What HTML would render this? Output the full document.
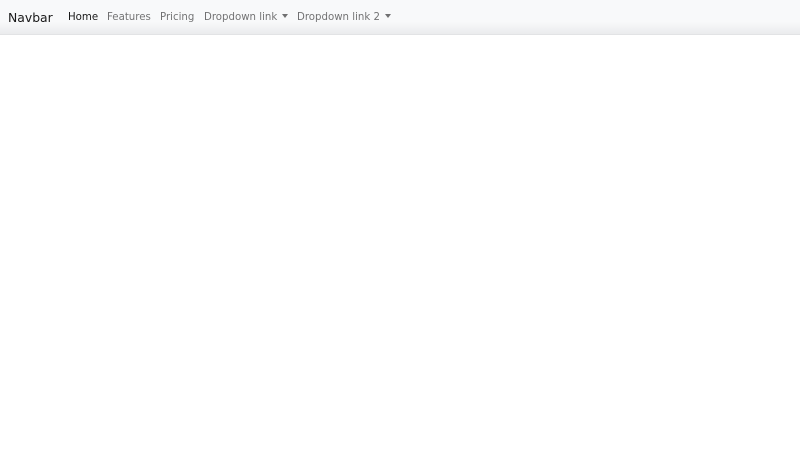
<!DOCTYPE html>
<html><head><style>
body{margin:0;background:#fff;font-family:"DejaVu Sans","Liberation Sans",sans-serif;}
.nav{height:35px;background:linear-gradient(#f8f9fa 0,#f8f9fa 22px,#e9eaec 35px);position:relative;border-bottom:1px solid #e2e3e5;box-sizing:border-box}
.nav span{position:absolute;top:0;line-height:35px;font-size:10.2px;color:rgba(0,0,0,.55);white-space:nowrap}
.brand{font-size:12.4px!important;color:rgba(0,0,0,.9)!important;left:8px}
.c::after{content:"";display:inline-block;margin-left:5px;vertical-align:2px;border-top:4px solid;border-left:3.5px solid transparent;border-right:3.5px solid transparent}
</style></head><body>
<div class="nav">
<span class="brand">Navbar</span>
<span style="left:68px;color:rgba(0,0,0,.9)">Home</span>
<span style="left:107px">Features</span>
<span style="left:160px">Pricing</span>
<span class="c" style="left:204px">Dropdown link</span>
<span class="c" style="left:297px">Dropdown link 2</span>
</div>
</body></html>
